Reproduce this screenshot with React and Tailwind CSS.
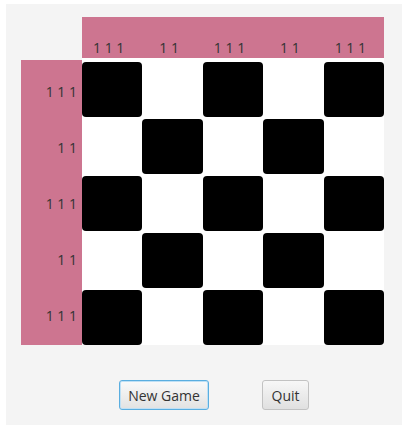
import React from "react";

const colLabels = ["1 1 1", "1 1", "1 1 1", "1 1", "1 1 1"];
const rowLabels = ["1 1 1", "1 1", "1 1 1", "1 1", "1 1 1"];

export default function App() {
  const cells = [];
  for (let r = 0; r < 5; r++) {
    for (let c = 0; c < 5; c++) {
      const black = (r + c) % 2 === 0;
      cells.push(
        <div key={`${r}-${c}`} className="h-[57px] pt-[1.5px]">
          {black ? <div className="h-[55px] w-full rounded-[4px] bg-black" /> : null}
        </div>
      );
    }
  }
  return (
    <div
      className="w-[402px] h-[426px] bg-white pt-[4px] pl-[6px] pb-[1px] text-[#333] text-[14px] leading-[19px]"
      style={{ fontFamily: '"Open Sans", "Noto Sans", sans-serif' }}
    >
      <div className="h-full bg-[#f4f4f4] flex flex-col">
        <div className="mt-[13px] ml-[76px] w-[302px] h-[41px] bg-[#cd7590] grid grid-cols-5">
          {colLabels.map((l, i) => (
            <div key={i} className="flex items-end justify-center pb-[1px] pr-[7px] whitespace-pre">
              {l}
            </div>
          ))}
        </div>
        <div className="flex items-start ml-[15px]">
          <div className="mt-[2px] w-[61px] h-[285px] bg-[#cd7590] flex flex-col pt-[3.5px]">
            {rowLabels.map((l, i) => (
              <div key={i} className="h-[56px] flex items-center justify-end pr-[5px] whitespace-pre">
                {l}
              </div>
            ))}
          </div>
          <div className="w-[302px] h-[287px] pt-[2px] bg-white">
            <div className="grid grid-cols-5">{cells}</div>
          </div>
        </div>
        <div className="flex mt-[35px] ml-[113px] gap-[53px]">
          <button className="w-[90px] h-[30px] rounded-[3px] border border-[#5aaee0] bg-gradient-to-b from-[#fafafa] to-[#e2e2e2] shadow-[inset_0_0_0_1px_#bfe0f5] flex items-center justify-center">
            New Game
          </button>
          <button className="w-[47px] h-[30px] rounded-[3px] border border-[#c2c2c2] bg-gradient-to-b from-[#f7f7f7] to-[#e0e0e0] flex items-center justify-center">
            Quit
          </button>
        </div>
      </div>
    </div>
  );
}
